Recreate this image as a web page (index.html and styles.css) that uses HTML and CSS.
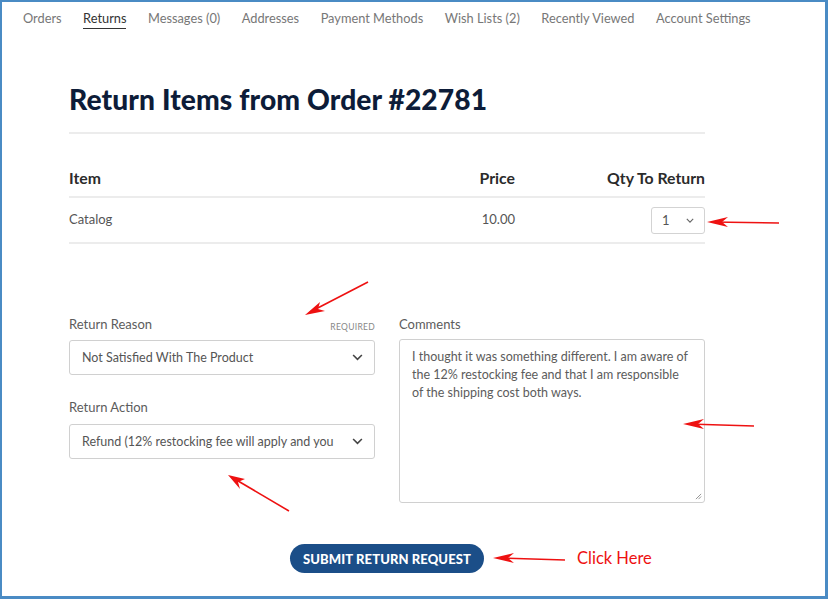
FILE: index.html
```html
<!DOCTYPE html>
<html>
<head>
<meta charset="utf-8">
<link rel="stylesheet" href="styles.css">
</head>
<body>
<div class="frame">
  <nav class="nav">
    <a class="nav-item">Orders</a>
    <a class="nav-item active">Returns</a>
    <a class="nav-item">Messages (0)</a>
    <a class="nav-item">Addresses</a>
    <a class="nav-item">Payment Methods</a>
    <a class="nav-item">Wish Lists (2)</a>
    <a class="nav-item">Recently Viewed</a>
    <a class="nav-item">Account Settings</a>
  </nav>
  <main class="main">
    <h1 class="title">Return Items from Order #22781</h1>
    <table class="items">
      <thead>
        <tr><th class="c-item">Item</th><th class="c-price">Price</th><th class="c-qty">Qty To Return</th></tr>
      </thead>
      <tbody>
        <tr>
          <td class="c-item">Catalog</td>
          <td class="c-price">10.00</td>
          <td class="c-qty"><span class="qty-select">1<svg class="chev-sm" viewBox="0 0 10 6" width="8" height="5"><path d="M1 1l4 4 4-4" fill="none" stroke="#666" stroke-width="1.4"/></svg></span></td>
        </tr>
      </tbody>
    </table>
    <div class="form">
      <div class="col">
        <div class="label-row"><span class="label">Return Reason</span><span class="req">REQUIRED</span></div>
        <div class="select"><span class="sel-text">Not Satisfied With The Product</span><svg class="chev" viewBox="0 0 12 8" width="11" height="7"><path d="M1 1.2l5 5 5-5" fill="none" stroke="#444" stroke-width="1.8"/></svg></div>
        <div class="label-row second"><span class="label">Return Action</span></div>
        <div class="select"><span class="sel-text">Refund (12% restocking fee will apply and you</span><svg class="chev" viewBox="0 0 12 8" width="11" height="7"><path d="M1 1.2l5 5 5-5" fill="none" stroke="#444" stroke-width="1.8"/></svg></div>
      </div>
      <div class="col">
        <div class="label-row"><span class="label">Comments</span></div>
        <div class="textarea">I thought it was something different. I am aware of<br>the 12% restocking fee and that I am responsible<br>of the shipping cost both ways.<svg class="grip" viewBox="0 0 8 8" width="7" height="7"><path d="M7 1L1 7M7 4L4 7" stroke="#888" stroke-width="1"/></svg></div>
      </div>
    </div>
    <div class="actions">
      <button class="submit">SUBMIT RETURN REQUEST</button>
    </div>
  </main>
  <svg class="annot" width="828" height="599" viewBox="0 0 828 599">
    <g stroke="#ee1111" stroke-width="1.6" fill="#ee1111">
      <line x1="779" y1="223" x2="712" y2="222"/>
      <path d="M707 222 L728 217 L722 222 L728 227 Z" stroke="none"/>
      <line x1="368" y1="282" x2="310" y2="312"/>
      <path d="M305 315 L320 302 L318 309 L325 311 Z" stroke="none"/>
      <line x1="289" y1="511" x2="233" y2="478"/>
      <path d="M228 475 L245 479 L238 482 L240 489 Z" stroke="none"/>
      <line x1="754" y1="426" x2="688" y2="424"/>
      <path d="M683 424 L704 419 L698 424 L704 429 Z" stroke="none"/>
      <line x1="565" y1="560" x2="498" y2="558"/>
      <path d="M493 558 L514 553 L508 558 L514 563 Z" stroke="none"/>
    </g>
  </svg>
  <span class="click-here">Click Here</span>
</div>
</body>
</html>
```
FILE: styles.css
```css
* { box-sizing: border-box; }
html, body { margin: 0; padding: 0; }
body {
  font-family: Lato, "Liberation Sans", sans-serif;
  background: #fff;
  width: 828px;
  height: 599px;
  overflow: hidden;
}
.frame {
  position: relative;
  width: 828px;
  height: 599px;
  border-style: solid;
  border-color: #4a8bc4;
  border-width: 2px 3px 3px 2px;
}
.nav {
  display: flex;
  gap: 21.5px;
  padding: 7px 0 0 21px;
  font-size: 12.8px;
  line-height: 18px;
  color: #777;
}
.nav-item { display: block; }
.nav-item.active {
  color: #333;
  border-bottom: 1px solid #333;
  padding-bottom: 1px;
}
.main {
  margin-left: 67px;
  width: 636px;
}
.title {
  margin: 54px 0 0;
  padding-bottom: 16px;
  font-size: 28.2px;
  line-height: 33px;
  font-weight: 900;
  color: #0d1c38;
  border-bottom: 2px solid #ececec;
  letter-spacing: 0.1px;
}
.items {
  width: 100%;
  border-collapse: collapse;
}
.items th {
  font-size: 15.8px;
  font-weight: 700;
  color: #2b2b2b;
  line-height: 20px;
  padding: 34px 0 8px;
  border-bottom: 2px solid #ececec;
}
.items td {
  font-size: 13px;
  color: #555;
  line-height: 20px;
  padding: 8px 0;
  height: 46px;
  border-bottom: 2px solid #ececec;
}
.items td.c-item, .items td.c-price { padding-top: 8px; padding-bottom: 10px; }
.c-item { text-align: left; }
.c-price { text-align: right; width: 120px; padding-right: 2px !important; }
.c-qty { text-align: right; width: 188px; }
.qty-select {
  display: inline-flex;
  align-items: center;
  justify-content: space-between;
  width: 54px;
  height: 27px;
  padding: 0 10px 0 10px;
  border: 1px solid #d3d3d3;
  border-radius: 3px;
  color: #555;
  vertical-align: middle;
}
.form {
  display: grid;
  grid-template-columns: 306px 306px;
  column-gap: 24px;
  margin-top: 71px;
}
.label-row {
  display: flex;
  justify-content: space-between;
  align-items: baseline;
  height: 18px;
  margin-bottom: 7px;
}
.label-row.second { margin-top: 23px; margin-bottom: 8px; }
.label {
  font-size: 13px;
  line-height: 18px;
  color: #5c5c5c;
}
.req {
  font-size: 8.5px;
  letter-spacing: 0.3px;
  color: #888;
  position: relative;
  top: 1px;
}
.select {
  display: flex;
  align-items: center;
  height: 35px;
  padding: 0 11px 0 12px;
  border: 1px solid #d0d0d0;
  border-radius: 3px;
  font-size: 12.5px;
  color: #555;
}
.sel-text {
  flex: 1;
  white-space: nowrap;
  margin-right: 10px;
}
.chev { flex: none; }
.textarea {
  position: relative;
  height: 164px;
  margin-top: -1px;
  padding: 8px 4px 8px 12px;
  border: 1px solid #d0d0d0;
  border-radius: 3px;
  font-size: 12.5px;
  line-height: 18px;
  color: #5c5c5c;
  white-space: nowrap;
}
.grip { position: absolute; right: 2px; bottom: 2px; }
.actions {
  display: flex;
  justify-content: center;
  margin-top: 41px;
}
.submit {
  font-family: Lato, "Liberation Sans", sans-serif;
  font-size: 13px;
  font-weight: 900;
  letter-spacing: 0.1px;
  color: #fff;
  background: #1b4e88;
  border: none;
  border-radius: 15px;
  height: 29px;
  width: 194px;
  padding: 0;
}
.annot { position: absolute; left: -2px; top: -2px; pointer-events: none; }
.click-here {
  position: absolute;
  left: 575px;
  top: 546px;
  font-size: 16.5px;
  line-height: 20px;
  color: #ee1111;
}
```
